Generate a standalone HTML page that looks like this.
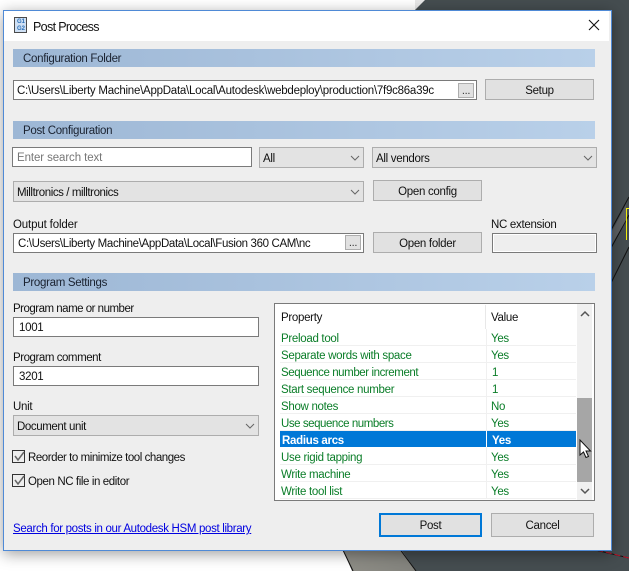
<!DOCTYPE html>
<html>
<head>
<meta charset="utf-8">
<style>
html,body{margin:0;padding:0;width:629px;height:571px;overflow:hidden;background:#fff}
body{position:relative;font-family:"Liberation Sans",sans-serif;font-size:11.5px;letter-spacing:-.3px;color:#111}
.a{position:absolute;box-sizing:border-box}
#dlg{position:absolute;left:3px;top:10px;width:607px;height:539px;background:#eee;border:1px solid #4f8ad6;box-shadow:0 3px 14px rgba(0,0,0,.38)}
.t{position:absolute;white-space:nowrap;line-height:16px;height:16px;margin-top:1px}
.h{position:absolute;left:13px;width:582px;height:18px;background:linear-gradient(90deg,#9db7d5,#b9d0e9);line-height:20px;padding-left:10px;box-sizing:border-box;color:#1a2230}
.in{position:absolute;box-sizing:border-box;background:#fff;border:1px solid #7a7a7a;line-height:20px;padding-left:3px;white-space:nowrap;overflow:hidden}
.btn{position:absolute;box-sizing:border-box;background:#e1e1e1;border:1px solid #adadad;text-align:center;line-height:22px}
.cb{position:absolute;box-sizing:border-box;background:#e3e3e3;border:1px solid #adadad;line-height:22px;padding-left:3px;white-space:nowrap}
.dots{position:absolute;box-sizing:border-box;background:#e1e1e1;border:1px solid #adadad;width:16px;height:15px;text-align:center;line-height:15px;font-size:11px;color:#333}
.g{color:#0a7d28}
.line{position:absolute;left:280px;width:296px;height:1px;background:#f0f0f0}
svg{position:absolute;left:0;top:0}
</style>
</head>
<body>
<svg width="629" height="571" style="z-index:0">
<defs><linearGradient id="gr" x1="0" x2="1"><stop offset="0" stop-color="#8e8d86"/><stop offset="1" stop-color="#83837d"/></linearGradient></defs>
<polygon points="415,0 629,0 629,571 415,571" fill="#454d50"/>
<polygon points="425,0 415,10 415,0" fill="#e8e8e8"/>
<polygon points="342,548 400,548 416,571 352,571" fill="url(#gr)"/>
<polygon points="400,548 629,548 629,571 416,571" fill="#454d50"/>
<line x1="342" y1="548" x2="353" y2="571" stroke="#111"/>
<line x1="399" y1="548" x2="416" y2="571" stroke="#111"/>
<line x1="591" y1="549" x2="629" y2="558" stroke="#111"/>
<line x1="597" y1="550" x2="629" y2="558" stroke="#c3142a" stroke-dasharray="6 3"/>
<line x1="611" y1="230" x2="629" y2="197" stroke="#111"/>
<line x1="611" y1="248" x2="629" y2="215" stroke="#111"/>
<line x1="611" y1="283" x2="629" y2="247" stroke="#111"/>
<polygon points="611,233 626,205 626,220 611,246" fill="#5e6264"/>
<path d="M626.500 240V208.500H629" stroke="#f2ee10" fill="none"/>
</svg>
<div id="dlg"></div>
<div class="a" style="left:4px;top:11px;width:605px;height:30px;background:#fff"></div>

<svg width="629" height="571" style="z-index:2;pointer-events:none">
<rect x="14.500" y="17.500" width="12" height="15" fill="#cfe0f4" stroke="#4a4a4a"/>
<path d="M589 20l10 10M599 20l-10 10" stroke="#111" stroke-width="1.100"/>
<path d="M15 456l3 4 6-8" fill="none" stroke="#666" stroke-width="1.500"/>
<path d="M15 480l3 4 6-8" fill="none" stroke="#666" stroke-width="1.500"/>
<path d="M351 156l4 4 4-4" fill="none" stroke="#666"/>
<path d="M584 156l4 4 4-4" fill="none" stroke="#666"/>
<path d="M351 190l4 4 4-4" fill="none" stroke="#666"/>
<path d="M246 424l4 4 4-4" fill="none" stroke="#666"/>
<path d="M581 316l4-4 4 4" fill="none" stroke="#555" stroke-width="1.500"/>
<path d="M581 489l4 4 4-4" fill="none" stroke="#555" stroke-width="1.500"/>
</svg>
<div class="t" style="left:16px;top:19px;margin-top:0;width:10px;font-size:6px;letter-spacing:0;line-height:7px;height:14px;font-weight:bold;color:#2a6fb8;z-index:3;white-space:normal;text-align:center">G1 G2</div>
<div class="t" style="left:33px;top:18px;font-size:12.5px;letter-spacing:-.65px">Post Process</div>

<div class="h" style="top:49px">Configuration Folder</div>
<div class="in" style="left:13px;top:80px;width:464px;height:20px;letter-spacing:-.25px">C:\Users\Liberty Machine\AppData\Local\Autodesk\webdeploy\production\7f9c86a39c</div>
<div class="dots" style="left:458px;top:83px">...</div>
<div class="btn" style="left:485px;top:79px;width:109px;height:21px">Setup</div>

<div class="h" style="top:121px">Post Configuration</div>
<div class="in" style="left:12px;top:147px;width:240px;height:20px;color:#777;padding-left:4px;letter-spacing:-.1px">Enter search text</div>
<div class="cb" style="left:259px;top:147px;width:105px;height:21px">All</div>
<div class="cb" style="left:372px;top:147px;width:225px;height:21px">All vendors</div>
<div class="cb" style="left:13px;top:181px;width:351px;height:21px;letter-spacing:-.42px">Milltronics / milltronics</div>
<div class="btn" style="left:373px;top:180px;width:109px;height:21px">Open config</div>
<div class="t" style="left:13px;top:216px;letter-spacing:-.15px">Output folder</div>
<div class="in" style="left:13px;top:233px;width:351px;height:20px;padding-left:4px;letter-spacing:-.35px">C:\Users\Liberty Machine\AppData\Local\Fusion 360 CAM\nc</div>
<div class="dots" style="left:345px;top:235px">...</div>
<div class="btn" style="left:373px;top:232px;width:109px;height:21px">Open folder</div>
<div class="t" style="left:491px;top:216px">NC extension</div>
<div class="in" style="left:492px;top:233px;width:105px;height:20px;background:#eee;box-shadow:inset 0 0 0 1px #fff"></div>

<div class="h" style="top:273px">Program Settings</div>
<div class="t" style="left:13px;top:300px;letter-spacing:-.5px">Program name or number</div>
<div class="in" style="left:13px;top:317px;width:246px;height:20px;padding-left:5px">1001</div>
<div class="t" style="left:13px;top:349px;letter-spacing:-.45px">Program comment</div>
<div class="in" style="left:13px;top:366px;width:246px;height:20px;padding-left:5px">3201</div>
<div class="t" style="left:13px;top:398px">Unit</div>
<div class="cb" style="left:13px;top:415px;width:246px;height:21px;letter-spacing:-.4px">Document unit</div>
<div class="a" style="left:12px;top:450px;width:13px;height:13px;border:1px solid #333;background:#eee"></div>
<div class="t" style="left:28px;top:449px;letter-spacing:-.45px">Reorder to minimize tool changes</div>
<div class="a" style="left:12px;top:474px;width:13px;height:13px;border:1px solid #333;background:#eee"></div>
<div class="t" style="left:28px;top:473px;letter-spacing:-.4px">Open NC file in editor</div>
<div class="t" style="left:13px;top:520px;color:#0000e0;text-decoration:underline;letter-spacing:-.33px">Search for posts in our Autodesk HSM post library</div>

<div class="a" style="left:274px;top:303px;width:321px;height:198px;background:#fff;border:1px solid #7a7a7a"></div>
<div class="a" style="left:577px;top:304px;width:15px;height:196px;background:#f0f0f0"></div>
<div class="a" style="left:577px;top:398px;width:15px;height:84px;background:#a6a6a6"></div>
<div class="a" style="left:485px;top:305px;width:1px;height:24px;background:#e8e8e8"></div>
<div class="a" style="left:486px;top:329px;width:1px;height:170px;background:#f0f0f0"></div>
<div class="t" style="left:281px;top:309px">Property</div>
<div class="t" style="left:491px;top:309px">Value</div>

<div class="line" style="top:345px"></div><div class="line" style="top:362px"></div><div class="line" style="top:379px"></div><div class="line" style="top:396px"></div><div class="line" style="top:413px"></div><div class="line" style="top:430px"></div><div class="line" style="top:464px"></div><div class="line" style="top:481px"></div><div class="line" style="top:498px"></div>

<div class="t g" style="left:281px;top:330px">Preload tool</div><div class="t g" style="left:491px;top:330px">Yes</div>
<div class="t g" style="left:281px;top:347px">Separate words with space</div><div class="t g" style="left:491px;top:347px">Yes</div>
<div class="t g" style="left:281px;top:364px;letter-spacing:-.42px">Sequence number increment</div><div class="t g" style="left:492px;top:364px">1</div>
<div class="t g" style="left:281px;top:381px">Start sequence number</div><div class="t g" style="left:492px;top:381px">1</div>
<div class="t g" style="left:281px;top:398px">Show notes</div><div class="t g" style="left:491px;top:398px">No</div>
<div class="t g" style="left:281px;top:415px;letter-spacing:-.45px">Use sequence numbers</div><div class="t g" style="left:491px;top:415px">Yes</div>
<div class="a" style="left:280px;top:431px;width:296px;height:16px;background:#0078d7"></div>
<div class="a" style="left:486px;top:431px;width:1px;height:16px;background:#fff"></div>
<div class="t" style="left:282px;top:432px;color:#fff;font-weight:bold">Radius arcs</div><div class="t" style="left:492px;top:432px;color:#fff;font-weight:bold">Yes</div>
<div class="t g" style="left:281px;top:449px">Use rigid tapping</div><div class="t g" style="left:491px;top:449px">Yes</div>
<div class="t g" style="left:281px;top:466px">Write machine</div><div class="t g" style="left:491px;top:466px">Yes</div>
<div class="t g" style="left:281px;top:483px">Write tool list</div><div class="t g" style="left:491px;top:483px">Yes</div>

<div class="btn" style="left:379px;top:513px;width:103px;height:24px;border:2px solid #0078d7;line-height:22px">Post</div>
<div class="btn" style="left:491px;top:513px;width:103px;height:24px;line-height:24px">Cancel</div>

<svg width="629" height="571" style="z-index:4">
<path d="M580 440v15l3.500-3 2.500 5.500 2.500-1-2.500-5.500h4.500z" fill="#fff" stroke="#111"/>
</svg>
</body>
</html>
